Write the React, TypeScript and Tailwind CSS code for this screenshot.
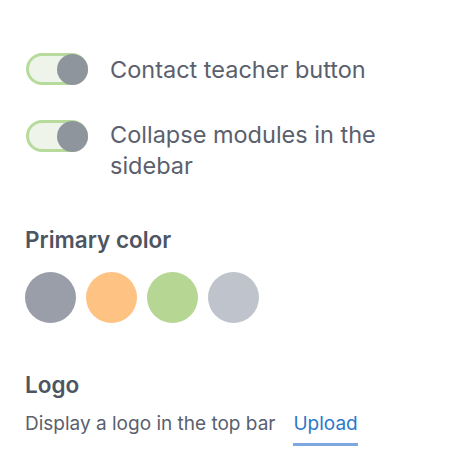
function Toggle() {
  return (
    <div className="flex items-center w-[62px] h-[32px] rounded-full border-[3px] border-[#b7db9c] bg-[#eef4ea] justify-end shrink-0">
      <div className="w-[31px] h-[31px] -mr-[3px] rounded-full bg-[#8f959d]" />
    </div>
  );
}

const colors = ["#9a9ea9", "#fec283", "#b6d794", "#bfc3cc"];

export default function App() {
  return (
    <div className="w-[474px] h-[476px] bg-white font-['Inter',sans-serif] text-[#5a606d] px-[26px] pt-[53px]">
      <div className="flex items-center gap-[22px]">
        <Toggle />
        <span className="text-[23.5px] leading-[31px]">Contact teacher button</span>
      </div>
      <div className="flex items-start gap-[22px] mt-[35px]">
        <Toggle />
        <span className="text-[23.5px] leading-[31px] -mt-[1px]">
          Collapse modules in the
          <br />
          sidebar
        </span>
      </div>
      <h2 className="mt-[44px] -ml-[1px] text-[22.5px] leading-[30px] font-semibold text-[#4e5562]">Primary color</h2>
      <div className="flex gap-[10px] mt-[17px] -ml-[1px]">
        {colors.map((c) => (
          <div key={c} className="w-[51px] h-[51px] rounded-full" style={{ backgroundColor: c }} />
        ))}
      </div>
      <h2 className="mt-[47px] -ml-[1px] text-[22.5px] leading-[30px] font-semibold text-[#4e5562]">Logo</h2>
      <div className="flex items-center gap-[18px] mt-[3px] -ml-[1px] text-[19px]">
        <span>Display a logo in the top bar</span>
        <span className="text-[#2c78cc] border-b-[3px] border-[#7ea8df] pb-[4px] mt-[7px]">Upload</span>
      </div>
    </div>
  );
}
